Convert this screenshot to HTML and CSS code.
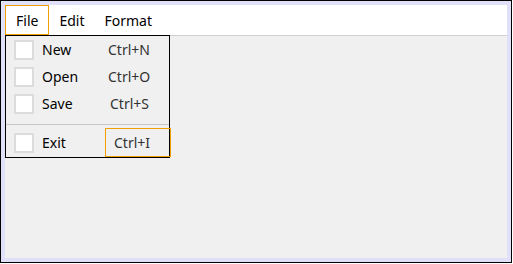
FILE: index.html
```html
<!DOCTYPE html>
<html lang="en">
<head>
    <meta charset="UTF-8">
    <title>Menu</title>
    <link rel="stylesheet" href="styles.css">
</head>
<body>
    <div class="frame">
        <div class="window">
            <div class="menubar">
                <div class="menu-item active">File</div>
                <div class="menu-item">Edit</div>
                <div class="menu-item">Format</div>
            </div>
            <div class="dropdown">
                <div class="row">
                    <span class="check"></span>
                    <span class="label">New</span>
                    <span class="shortcut">Ctrl+N</span>
                </div>
                <div class="row">
                    <span class="check"></span>
                    <span class="label">Open</span>
                    <span class="shortcut">Ctrl+O</span>
                </div>
                <div class="row">
                    <span class="check"></span>
                    <span class="label">Save</span>
                    <span class="shortcut save">Ctrl+S</span>
                </div>
                <div class="separator"></div>
                <div class="row last">
                    <span class="check"></span>
                    <span class="label">Exit</span>
                    <span class="shortcut focused">Ctrl+I</span>
                </div>
            </div>
        </div>
    </div>
</body>
</html>
```

FILE: styles.css
```css
body { margin: 0; font-family: "Noto Sans", "Open Sans", sans-serif; font-size: 14px; color: #000; }
.frame { box-sizing: border-box; width: 512px; height: 263px; border: 1px solid #000; padding: 4px; background: #e0e0f8; }
.window { position: relative; height: 100%; background: #f0f0f0; }
.menubar { display: flex; height: 30px; background: #fff; border-bottom: 1px solid #d0d0d0; }
.menu-item { display: flex; align-items: center; padding: 0 9px; border: 1px solid transparent; }
.menu-item.active { padding: 0 10px; border-color: #f0a000; }
.dropdown { position: absolute; top: 30px; left: 0; width: 163px; border: 1px solid #000; background: #f0f0f0; }
.row { display: flex; align-items: center; height: 27px; }
.row.last { height: 29px; }
.check { box-sizing: border-box; width: 20px; height: 20px; margin: 0 8px 0 8px; background: #fff; border: 2px solid #dcdcdc; }
.label { width: 66px; }
.shortcut { color: #333; }
.shortcut.save { margin-left: 2px; }
.separator { height: 1px; margin: 7px 0 3px; background: #c8c8c8; }
.shortcut.focused { box-sizing: border-box; height: 29px; flex: 1; display: flex; align-items: center; padding-left: 8px; margin-left: -3px; margin-right: -2px; border: 1px solid #f0a000; }
```
